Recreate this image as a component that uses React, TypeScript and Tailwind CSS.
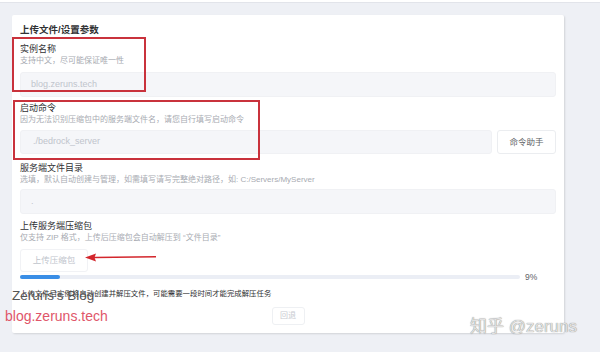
import React from 'react'

const cjk = { fontFamily: '"Liberation Sans", "Noto Sans CJK SC", sans-serif' }

function Field({ label, hint, children, className = '' }: { label: string; hint: string; children: React.ReactNode; className?: string }) {
  return (
    <div className={className}>
      <div className="h-[12px] text-[9px] leading-[12px] text-[#303133]">{label}</div>
      <div className="h-[11px] text-[8px] leading-[11px] text-[#a8abb2]">{hint}</div>
      {children}
    </div>
  )
}

export default function App() {
  return (
    <div className="relative h-[352px] w-[600px] overflow-hidden bg-[#eef0f5]" style={cjk}>
      <div className="h-[3px] border-b border-[#e2e4ea] bg-white" />
      <div className="ml-[12px] mt-[12px] w-[552px] rounded-[2px] bg-white px-[8px] pb-[8px] pt-[8px] shadow-[1px_1px_2px_rgba(0,0,0,0.12)]">
        <div className="h-[14px] text-[9.5px] font-bold leading-[14px] text-[#303133]">上传文件/设置参数</div>

        <Field label="实例名称" hint="支持中文，尽可能保证唯一性" className="mt-[6px]">
          <div className="mt-[6px] flex h-[25px] items-center rounded-[3px] border border-[#f0f1f4] bg-[#f5f6f9] px-[10px] text-[9px] text-[#c0c4cc]">
            blog.zeruns.tech
          </div>
        </Field>

        <Field label="启动命令" hint="因为无法识别压缩包中的服务端文件名，请您自行填写启动命令" className="mt-[5px]">
          <div className="mt-[5px] flex h-[24px] gap-[5px]">
            <div className="flex flex-1 items-center rounded-[3px] border border-[#f0f1f4] bg-[#f5f6f9] px-[12px] text-[9px] text-[#c0c4cc]">
              ./bedrock_server
            </div>
            <div className="flex w-[59px] items-center justify-center rounded-[3px] border border-[#ebedf0] bg-white text-[8.5px] text-[#606266]">
              命令助手
            </div>
          </div>
        </Field>

        <Field
          label="服务端文件目录"
          hint="选填，默认自动创建与管理，如需填写请写完整绝对路径，如: C:/Servers/MyServer"
          className="mt-[8px]"
        >
          <div className="mt-[4px] flex h-[25px] items-center rounded-[3px] border border-[#f0f1f4] bg-[#f5f6f9] px-[10px] text-[9px] text-[#c0c4cc]">
            .
          </div>
        </Field>

        <Field label="上传服务端压缩包" hint="仅支持 ZIP 格式，上传后压缩包会自动解压到 “文件目录”" className="mt-[6px]">
          <div className="mt-[6px] flex h-[23px] w-[68px] items-center justify-center rounded-[3px] border border-[#f1f2f5] bg-white text-[8.5px] text-[#c0c4cc]">
            上传压缩包
          </div>
          <div className="mt-[3px] flex h-[4px] items-center gap-[5px]">
            <div className="h-[4px] w-[500px] rounded-full bg-[#ebeef5]">
              <div className="h-[4px] w-[40px] rounded-full bg-[#3a8ee6]" />
            </div>
            <span className="text-[8.5px] text-[#606266]">9%</span>
          </div>
        </Field>

        <div className="mt-[9px] h-[12px] text-[7.4px] leading-[12px] text-[#303133]">
          上传文件后实例将自动创建并解压文件，可能需要一段时间才能完成解压任务
        </div>

        <div className="mt-[7px] flex justify-center">
          <div className="flex h-[18px] w-[33px] items-center justify-center rounded-[3px] border border-[#eef0f3] bg-white text-[8px] text-[#c8cad0]">
            回退
          </div>
        </div>
      </div>

      {/* annotation boxes */}
      <div className="absolute left-[12px] top-[37px] h-[55px] w-[134px] border-2 border-[#c9323c]" />
      <div className="absolute left-[13px] top-[100px] h-[60px] w-[247px] border-2 border-[#c9323c]" />

      {/* arrow */}
      <svg className="absolute left-[82px] top-[252px]" width="76" height="11" viewBox="0 0 76 11">
        <path d="M12 5.5 L74 4.8" stroke="#d3262c" strokeWidth="1.6" fill="none" />
        <path d="M3 5.6 L14 1.5 L12.5 5.5 L14 9.5 Z" fill="#d3262c" />
      </svg>

      {/* watermarks */}
      <div className="absolute left-[12px] top-[288px] text-[13.5px] leading-[15px] text-[#555]">Zeruns’s Blog</div>
      <div className="absolute left-[5px] top-[308px] text-[14px] leading-[16px] text-[#e0566a]">blog.zeruns.tech</div>
      <div className="absolute left-[470px] top-[317px] text-[17px] leading-[19px] text-[#e2e2e2] [text-shadow:0_0_1px_#666]">
        知乎 @zeruns
      </div>
    </div>
  )
}
